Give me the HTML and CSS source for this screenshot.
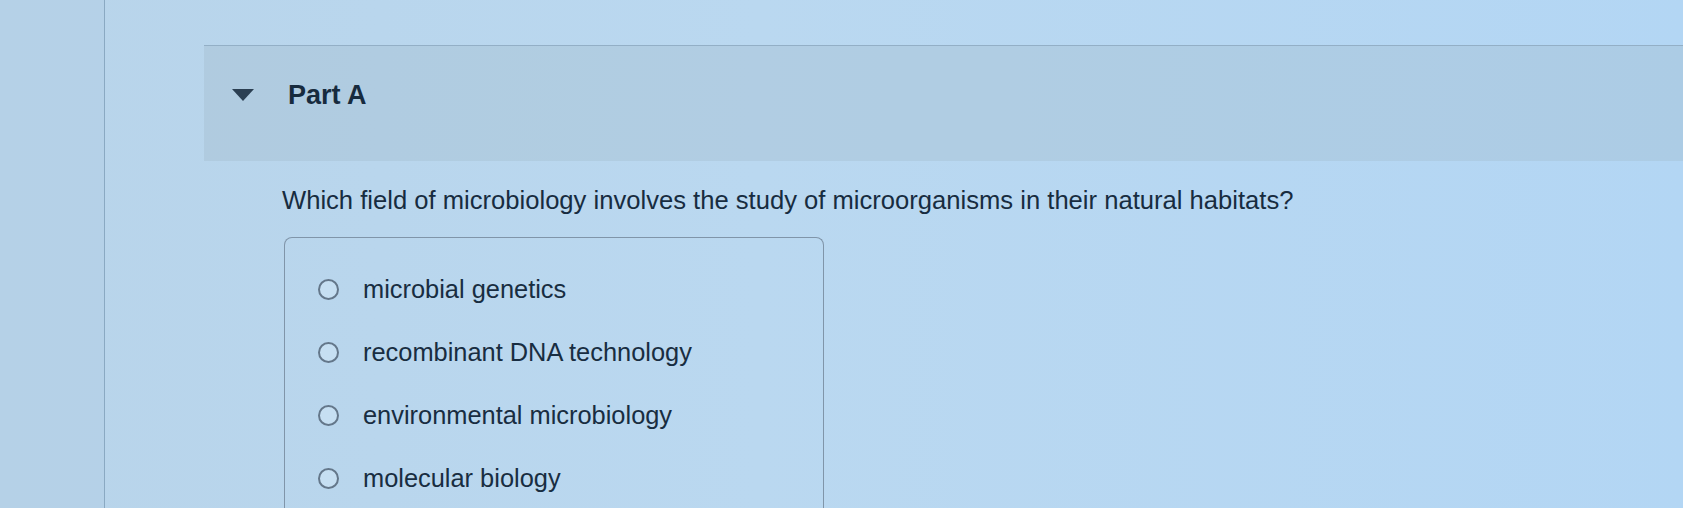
FILE: index.html
```html
<!DOCTYPE html>
<html lang="en">
<head>
    <meta charset="UTF-8">
    <meta name="viewport" content="width=device-width, initial-scale=1.0">
    <title>Part A</title>
    <link rel="stylesheet" href="styles.css">
</head>
<body>

    <div class="side-rail"></div>

    <main class="assignment">
        <section class="part">
            <div class="part-header">
                <span class="toggle-arrow"></span>
                <h2>Part A</h2>
            </div>

            <div class="part-body">
                <p class="question">Which field of microbiology involves the study of microorganisms in their natural habitats?</p>

                <div class="choices">
                    <label class="choice">
                        <input type="radio" name="partA" value="a">
                        <span>microbial genetics</span>
                    </label>
                    <label class="choice">
                        <input type="radio" name="partA" value="b">
                        <span>recombinant DNA technology</span>
                    </label>
                    <label class="choice">
                        <input type="radio" name="partA" value="c">
                        <span>environmental microbiology</span>
                    </label>
                    <label class="choice">
                        <input type="radio" name="partA" value="d">
                        <span>molecular biology</span>
                    </label>
                </div>
            </div>
        </section>
    </main>

</body>
</html>
```

FILE: styles.css
```css
/* Basic Reset */
* {
    margin: 0;
    padding: 0;
    box-sizing: border-box;
}

html, body {
    height: 100%;
}

body {
    font-family: 'Liberation Sans', Arial, Helvetica, sans-serif;
    background: linear-gradient(90deg, #b8d4ea 0%, #bad8f0 45%, #b3d6f4 100%);
    color: #172c40;
    display: flex;
    overflow: hidden;
}

/* Left navigation strip */
.side-rail {
    width: 105px;
    flex-shrink: 0;
    border-right: 1px solid #8aa9c2;
    background-color: rgba(170, 200, 222, 0.25);
}

.assignment {
    flex: 1;
    padding-top: 45px;
    padding-left: 99px;
}

/* Collapsible part header */
.part-header {
    height: 116px;
    padding: 36px 0 0 28px;
    display: flex;
    align-items: flex-start;
    border-top: 1px solid #93afc6;
    background-color: rgba(160, 182, 200, 0.32);
}

.toggle-arrow {
    width: 0;
    height: 0;
    margin-top: 7px;
    border-left: 11px solid transparent;
    border-right: 11px solid transparent;
    border-top: 12px solid #2b3f52;
}

.part-header h2 {
    margin-left: 34px;
    font-size: 27px;
    line-height: 27px;
    font-weight: bold;
    color: #172b3e;
}

/* Question area */
.part-body {
    padding: 24px 0 0 78px;
}

.question {
    font-size: 25.6px;
    line-height: 30px;
    color: #172c40;
}

.choices {
    margin-top: 22px;
    margin-left: 2px;
    width: 540px;
    height: 271px;
    padding: 20px 0 0 33px;
    border: 1px solid #8095a9;
    border-bottom: none;
    border-radius: 8px 8px 0 0;
}

.choice {
    height: 63px;
    display: flex;
    align-items: center;
    font-size: 25.4px;
    color: #182d41;
    cursor: pointer;
}

/* Radio buttons drawn as plain rings */
.choice input[type="radio"] {
    -webkit-appearance: none;
    appearance: none;
    width: 21px;
    height: 21px;
    border: 2px solid #64778a;
    border-radius: 50%;
    background-color: #c6dff2;
    margin-right: 24px;
    flex-shrink: 0;
}

.choice input[type="radio"]:checked {
    background-color: #1e3347;
    box-shadow: inset 0 0 0 3px #c6dff2;
}
```
